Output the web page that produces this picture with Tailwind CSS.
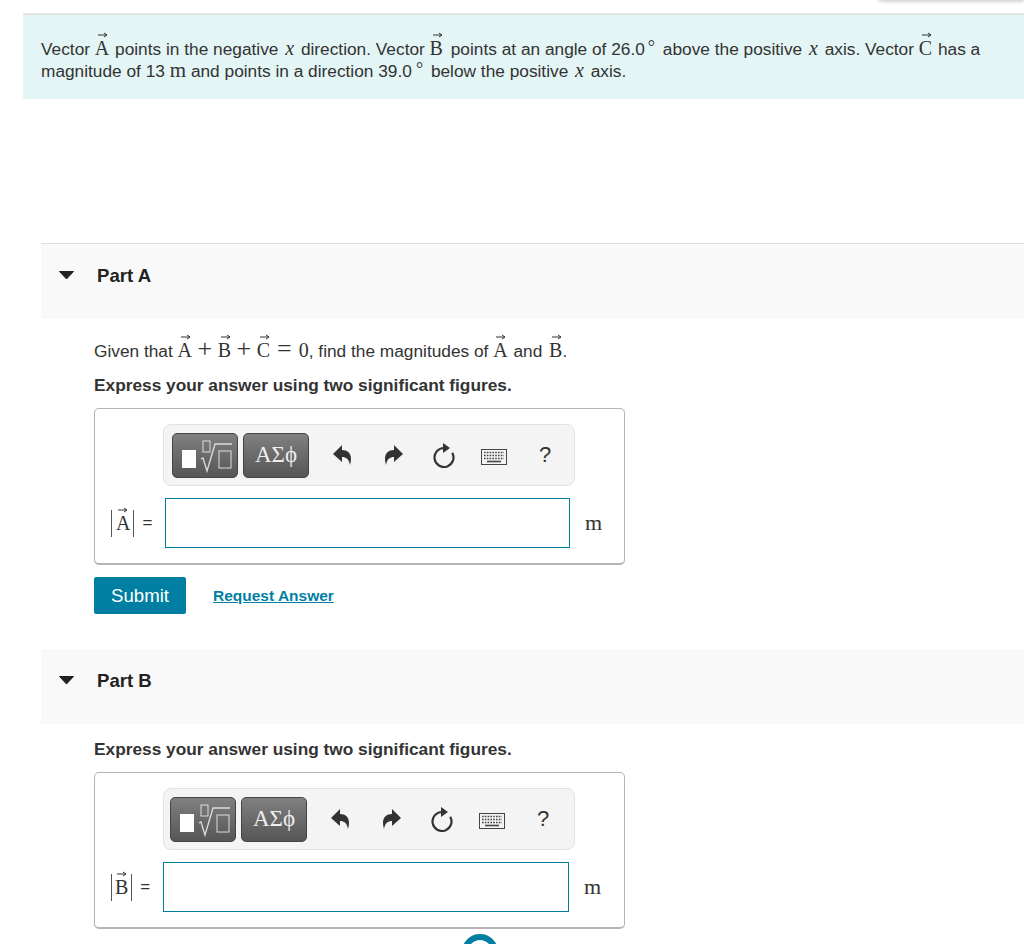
<!DOCTYPE html>
<html lang="en">
<head>
  <meta charset="UTF-8">
  <title>Vectors</title>
  <script src="https://cdn.jsdelivr.net/npm/@tailwindcss/browser@4"></script>
</head>
<body class="bg-white font-['Liberation_Sans',sans-serif] text-[17.3px] leading-[22px] text-[#333]">
  <div class="relative h-[944px] overflow-hidden pt-[13px]">
    <!-- shadow of a menu cut off at the top edge -->
    <div class="absolute right-0 top-[-10px] h-[10px] w-[145px] shadow-[0_1px_4px_rgba(0,0,0,0.25)]"></div>

    <!-- intro -->
    <div class="ml-[23px] h-[86px] whitespace-nowrap border-t-2 border-[#e3e3e3] bg-[#e4f5f6] pl-[18px] pt-[23px]">
      Vector
      <span class="relative mr-[1px] inline-block font-['Liberation_Serif',serif] text-[20px] leading-none">A<svg class="absolute left-[3px] top-[-6px]" width="10" height="6" viewBox="0 0 10 6"><path d="M0 3H9M6 1L9 3L6 5" fill="none" stroke="#333"/></svg></span>
      points in the negative <span class="mx-[2px] font-['Liberation_Serif',serif] text-[20px] italic leading-none">x</span> direction. Vector
      <span class="relative mr-[3px] inline-block font-['Liberation_Serif',serif] text-[20px] leading-none">B<svg class="absolute left-[3px] top-[-6px]" width="10" height="6" viewBox="0 0 10 6"><path d="M0 3H9M6 1L9 3L6 5" fill="none" stroke="#333"/></svg></span>
      points at an angle of 26.0<span class="ml-[3px] mr-[3px] align-[2px] font-['Liberation_Serif',serif] text-[18px] leading-none">°</span> above the positive <span class="mx-[2px] font-['Liberation_Serif',serif] text-[20px] italic leading-none">x</span> axis. Vector
      <span class="relative mr-[1px] inline-block font-['Liberation_Serif',serif] text-[20px] leading-none">C<svg class="absolute left-[3px] top-[-6px]" width="10" height="6" viewBox="0 0 10 6"><path d="M0 3H9M6 1L9 3L6 5" fill="none" stroke="#333"/></svg></span>
      has a<br>
      magnitude of 13 <span class="font-['Liberation_Serif',serif] text-[21px] leading-none">m</span> and points in a direction 39.0<span class="ml-[4px] mr-[3px] align-[2px] font-['Liberation_Serif',serif] text-[18px] leading-none">°</span> below the positive <span class="mx-[2px] font-['Liberation_Serif',serif] text-[20px] italic leading-none">x</span> axis.
    </div>

    <!-- Part A -->
    <div class="ml-[41px] mt-[144px] flex h-[76px] items-start border-t border-[#dedede] bg-[#f9f9f9] pt-[21px]">
      <svg class="ml-[18px] mt-[6px]" width="15" height="8" viewBox="0 0 15 8"><path d="M0.5 0.5H14.5L7.5 8Z" fill="#222" stroke="#222" stroke-linejoin="round"/></svg>
      <h2 class="ml-[23px] text-[18.6px] font-bold text-[#222]">Part A</h2>
    </div>

    <div class="ml-[94px] w-[531px]">
      <p class="mt-[17px] whitespace-nowrap">
        Given that
        <span class="relative inline-block font-['Liberation_Serif',serif] text-[20px] leading-none">A<svg class="absolute left-[3px] top-[-6px]" width="10" height="6" viewBox="0 0 10 6"><path d="M0 3H9M6 1L9 3L6 5" fill="none" stroke="#333"/></svg></span><span class="mx-[5.5px] font-['Liberation_Serif',serif] text-[26px] leading-none">+</span><span class="relative inline-block font-['Liberation_Serif',serif] text-[20px] leading-none">B<svg class="absolute left-[3px] top-[-6px]" width="10" height="6" viewBox="0 0 10 6"><path d="M0 3H9M6 1L9 3L6 5" fill="none" stroke="#333"/></svg></span><span class="mx-[5.5px] font-['Liberation_Serif',serif] text-[26px] leading-none">+</span><span class="relative inline-block font-['Liberation_Serif',serif] text-[20px] leading-none">C<svg class="absolute left-[3px] top-[-6px]" width="10" height="6" viewBox="0 0 10 6"><path d="M0 3H9M6 1L9 3L6 5" fill="none" stroke="#333"/></svg></span><span class="mx-[7px] font-['Liberation_Serif',serif] text-[26px] leading-none">=</span><span class="font-['Liberation_Serif',serif] text-[20px] leading-none">0</span>, find the magnitudes of
        <span class="relative mr-[1px] inline-block font-['Liberation_Serif',serif] text-[20px] leading-none">A<svg class="absolute left-[3px] top-[-6px]" width="10" height="6" viewBox="0 0 10 6"><path d="M0 3H9M6 1L9 3L6 5" fill="none" stroke="#333"/></svg></span>
        and
        <span class="relative ml-[2px] inline-block font-['Liberation_Serif',serif] text-[20px] leading-none">B<svg class="absolute left-[3px] top-[-6px]" width="10" height="6" viewBox="0 0 10 6"><path d="M0 3H9M6 1L9 3L6 5" fill="none" stroke="#333"/></svg></span>.
      </p>
      <p class="mt-[12px] font-bold">Express your answer using two significant figures.</p>

      <div class="mt-[12px] h-[157px] rounded-[5px] border border-b-2 border-[#b5b5b5] pt-[15px]">
        <!-- toolbar -->
        <div class="ml-[68px] flex h-[62px] w-[412px] items-center rounded-[8px] border border-[#e2e2e2] bg-[#f4f4f4] pl-[8px]">
          <button class="flex h-[45px] w-[66px] items-center justify-center rounded-[5px] border border-[#444] bg-gradient-to-b from-[#808080] to-[#565656]">
            <svg width="64" height="43" viewBox="1 1 64 43"><rect x="10" y="17" width="14" height="18" fill="#fff"/><rect x="31" y="8" width="7" height="11" fill="none" stroke="#ddd"/><path d="M29 26L31 25L35 38L43 11H60" fill="none" stroke="#ddd" stroke-width="1.3"/><rect x="47" y="18" width="12" height="17" fill="none" stroke="#ddd"/></svg>
          </button>
          <button class="ml-[5px] flex h-[45px] w-[66px] items-center justify-center rounded-[5px] border border-[#444] bg-gradient-to-b from-[#808080] to-[#565656] font-['Liberation_Serif',serif] text-[23px] text-[#eee]">ΑΣϕ</button>
          <svg class="ml-[24px]" width="19" height="20" viewBox="0 0 19 20"><path d="M0 9L9 0V5C16 5 20 10 17 20C16 14 13 12 9 12V17Z" fill="#333"/></svg>
          <svg class="ml-[32px]" width="19" height="20" viewBox="0 0 19 20"><path d="M19 9L10 0V5C3 5 -1 10 2 20C3 14 6 12 10 12V17Z" fill="#333"/></svg>
          <svg class="ml-[30px]" width="22" height="25" viewBox="0 0 22 25"><path d="M11 5A9.5 9.5 0 1 0 19.2 9.7" fill="none" stroke="#333" stroke-width="2.2"/><path d="M10 0L17 5L10 10Z" fill="#333"/></svg>
          <svg class="ml-[26px] mt-[3px]" width="26" height="16" viewBox="0 0 26 16"><rect x="0.5" y="0.5" width="25" height="15" fill="#f4f4f4" stroke="#444"/><path d="M3 3.5H23M3 6.5H23M3 9.5H23" stroke="#444" stroke-width="1.6" stroke-dasharray="1.6 1.2"/><path d="M6 12.5H20" stroke="#444" stroke-width="1.6"/></svg>
          <span class="ml-[32px] text-[22px] text-[#333]">?</span>
        </div>
        <!-- answer row -->
        <div class="mt-[12px] flex h-[50px] items-center">
          <span class="ml-[16px] flex w-[54px] items-center font-['Liberation_Serif',serif] text-[20px]"><span class="h-[27px] w-px bg-[#555]"></span><span class="relative ml-[4px] inline-block leading-none">A<svg class="absolute left-[2px] top-[-6px]" width="10" height="6" viewBox="0 0 10 6"><path d="M0 3H9M6 1L9 3L6 5" fill="none" stroke="#333"/></svg></span><span class="ml-[3px] h-[27px] w-px bg-[#555]"></span><span class="ml-[8px] font-['Liberation_Sans',sans-serif] text-[17px]">=</span></span>
          <input class="h-[50px] w-[405px] border border-[#007fa3] bg-white" type="text">
          <span class="ml-[15px] font-['Liberation_Serif',serif] text-[22px]">m</span>
        </div>
      </div>

      <div class="mt-[12px] flex items-center">
        <button class="h-[37px] w-[92px] rounded-[2px] bg-[#007fa3] text-[18.6px] text-white">Submit</button>
        <a href="#" class="ml-[27px] text-[15.5px] font-bold text-[#007fa3] underline">Request Answer</a>
      </div>
    </div>

    <!-- Part B -->
    <div class="ml-[41px] mt-[35px] flex h-[75px] items-start bg-[#f9f9f9] pt-[21px]">
      <svg class="ml-[18px] mt-[6px]" width="15" height="8" viewBox="0 0 15 8"><path d="M0.5 0.5H14.5L7.5 8Z" fill="#222" stroke="#222" stroke-linejoin="round"/></svg>
      <h2 class="ml-[23px] text-[18.6px] font-bold text-[#222]">Part B</h2>
    </div>

    <div class="ml-[94px] w-[531px]">
      <p class="mt-[14px] font-bold">Express your answer using two significant figures.</p>

      <div class="mt-[12px] h-[157px] rounded-[5px] border border-b-2 border-[#b5b5b5] pt-[15px]">
        <div class="ml-[68px] flex h-[62px] w-[412px] items-center rounded-[8px] border border-[#e2e2e2] bg-[#f4f4f4] pl-[6px]">
          <button class="flex h-[45px] w-[66px] items-center justify-center rounded-[5px] border border-[#444] bg-gradient-to-b from-[#808080] to-[#565656]">
            <svg width="64" height="43" viewBox="1 1 64 43"><rect x="10" y="17" width="14" height="18" fill="#fff"/><rect x="31" y="8" width="7" height="11" fill="none" stroke="#ddd"/><path d="M29 26L31 25L35 38L43 11H60" fill="none" stroke="#ddd" stroke-width="1.3"/><rect x="47" y="18" width="12" height="17" fill="none" stroke="#ddd"/></svg>
          </button>
          <button class="ml-[5px] flex h-[45px] w-[66px] items-center justify-center rounded-[5px] border border-[#444] bg-gradient-to-b from-[#808080] to-[#565656] font-['Liberation_Serif',serif] text-[23px] text-[#eee]">ΑΣϕ</button>
          <svg class="ml-[24px]" width="19" height="20" viewBox="0 0 19 20"><path d="M0 9L9 0V5C16 5 20 10 17 20C16 14 13 12 9 12V17Z" fill="#333"/></svg>
          <svg class="ml-[32px]" width="19" height="20" viewBox="0 0 19 20"><path d="M19 9L10 0V5C3 5 -1 10 2 20C3 14 6 12 10 12V17Z" fill="#333"/></svg>
          <svg class="ml-[30px]" width="22" height="25" viewBox="0 0 22 25"><path d="M11 5A9.5 9.5 0 1 0 19.2 9.7" fill="none" stroke="#333" stroke-width="2.2"/><path d="M10 0L17 5L10 10Z" fill="#333"/></svg>
          <svg class="ml-[26px] mt-[3px]" width="26" height="16" viewBox="0 0 26 16"><rect x="0.5" y="0.5" width="25" height="15" fill="#f4f4f4" stroke="#444"/><path d="M3 3.5H23M3 6.5H23M3 9.5H23" stroke="#444" stroke-width="1.6" stroke-dasharray="1.6 1.2"/><path d="M6 12.5H20" stroke="#444" stroke-width="1.6"/></svg>
          <span class="ml-[32px] text-[22px] text-[#333]">?</span>
        </div>
        <div class="mt-[12px] flex h-[50px] items-center">
          <span class="ml-[16px] flex w-[52px] items-center font-['Liberation_Serif',serif] text-[20px]"><span class="h-[27px] w-px bg-[#555]"></span><span class="relative ml-[3px] inline-block leading-none">B<svg class="absolute left-[2px] top-[-6px]" width="10" height="6" viewBox="0 0 10 6"><path d="M0 3H9M6 1L9 3L6 5" fill="none" stroke="#333"/></svg></span><span class="ml-[3px] h-[27px] w-px bg-[#555]"></span><span class="ml-[8px] font-['Liberation_Sans',sans-serif] text-[17px]">=</span></span>
          <input class="h-[50px] w-[406px] border border-[#007fa3] bg-white" type="text">
          <span class="ml-[15px] font-['Liberation_Serif',serif] text-[22px]">m</span>
        </div>
      </div>
    </div>

    <!-- floating help button, cut off at the bottom edge -->
    <div class="absolute left-[462px] top-[934px] h-[36px] w-[36px] rounded-full border-[6px] border-[#007fa3] bg-white"></div>
  </div>
</body>
</html>
